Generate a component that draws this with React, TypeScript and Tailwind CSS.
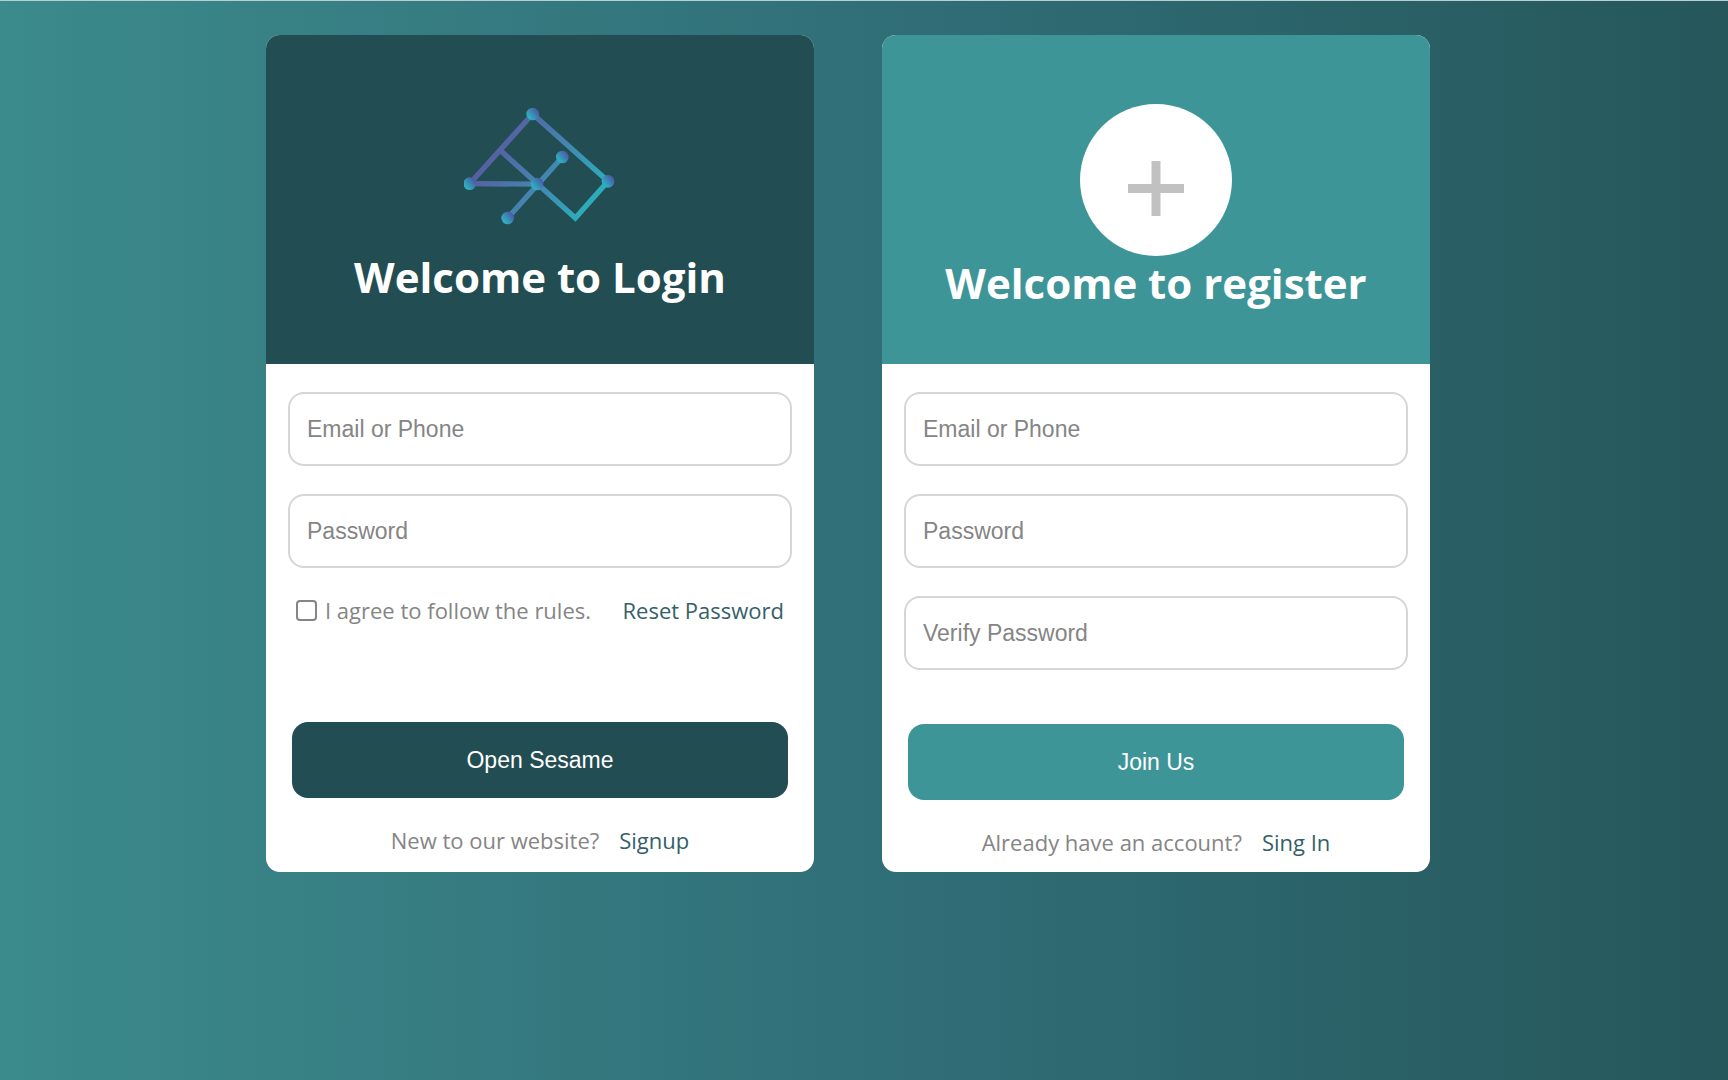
import type { ReactNode } from 'react'

const joints = [
  [277, 72],
  [88, 281],
  [503, 274],
  [366, 201],
  [202, 384],
  [290, 282],
]

function Logo() {
  return (
    <svg width="152" height="146" viewBox="71 42 456 438" fill="none" aria-hidden="true">
      <defs>
        <linearGradient id="line" gradientUnits="userSpaceOnUse" x1="180" y1="150" x2="450" y2="330">
          <stop offset="0" stopColor="#5560a2" />
          <stop offset="0.5" stopColor="#4484b0" />
          <stop offset="1" stopColor="#2eabba" />
        </linearGradient>
        <linearGradient id="dot" x1="0.85" y1="0.2" x2="0.25" y2="0.7">
          <stop offset="0" stopColor="#4b5aa8" />
          <stop offset="1" stopColor="#2fabbd" />
        </linearGradient>
      </defs>
      <g stroke="url(#line)" strokeWidth="16">
        <path d="M88 281 277 72 503 274 405 384 182 183" />
        <path d="M88 281 290 282.5" />
        <path d="M202 384 366 201" />
      </g>
      {joints.map(([cx, cy]) => (
        <circle key={cx} cx={cx} cy={cy} r="19" fill="url(#dot)" />
      ))}
    </svg>
  )
}

function Card({ title, color, picture, children }: { title: string; color: string; picture: ReactNode; children: ReactNode }) {
  return (
    <section className="w-full max-w-[548px] overflow-hidden rounded-[14px] bg-white">
      <header className={`flex h-[329px] flex-col items-center pt-[69px] ${color}`}>
        {picture}
        <h1 className="text-[42px] leading-[54px] font-bold whitespace-nowrap text-white">{title}</h1>
      </header>
      <form className="flex flex-col px-[22px] pt-7 pb-4" onSubmit={(e) => e.preventDefault()}>
        {children}
      </form>
    </section>
  )
}

function Field({ label, type = 'text' }: { label: string; type?: string }) {
  return (
    <input
      type={type}
      aria-label={label}
      placeholder={label}
      className="mb-7 h-[74px] w-full rounded-2xl border-2 border-[#d6d6d6] px-[17px] font-['Liberation_Sans',Arial,sans-serif] text-[23px] text-gray-700 outline-none placeholder:text-[#858585]"
    />
  )
}

function Submit({ label, className }: { label: string; className: string }) {
  return (
    <button
      type="submit"
      className={`mx-1 mb-7 h-[76px] rounded-2xl font-['Liberation_Sans',Arial,sans-serif] text-[23px] text-white ${className}`}
    >
      {label}
    </button>
  )
}

function Footer({ text, link }: { text: string; link: string }) {
  return (
    <p className="flex justify-center gap-5">
      <span>{text}</span>
      <a href="#" className="text-[#355f69]">{link}</a>
    </p>
  )
}

export default function App() {
  return (
    <main className="min-h-screen border-t border-[#b5cfd2] bg-[linear-gradient(90deg,#3b8a8c_0%,#306d76_54%,#25575b_100%)] bg-origin-border px-4 pt-[34px] pb-8 font-['Segoe_UI','Open_Sans',sans-serif] text-[22px] leading-7 text-[#858585] lg:pr-12">
      <div className="flex flex-col items-center justify-center gap-[68px] lg:flex-row lg:items-stretch">
        <Card title="Welcome to Login" color="bg-[#224d52]" picture={<Logo />}>
          <Field label="Email or Phone" />
          <Field label="Password" type="password" />
          <div className="flex items-center justify-between px-2 whitespace-nowrap">
            <label className="flex items-center gap-2">
              <input
                type="checkbox"
                className="size-[21px] appearance-none rounded-sm border-2 border-[#858585] bg-white checked:bg-[#224d52]"
              />
              I agree to follow the rules.
            </label>
            <a href="#" className="text-[#355f69]">Reset Password</a>
          </div>
          <Submit label="Open Sesame" className="mt-[98px] bg-[#224d52]" />
          <Footer text="New to our website?" link="Signup" />
        </Card>

        <Card
          title="Welcome to register"
          color="bg-[#3e9597]"
          picture={
            <button type="button" aria-label="Add photo" className="rounded-full bg-white">
              <svg width="152" height="152" viewBox="0 0 152 152" stroke="#c1c1c1" strokeWidth="9">
                <path d="M48 84.5h56M76 57v55" />
              </svg>
            </button>
          }
        >
          <Field label="Email or Phone" />
          <Field label="Password" type="password" />
          <Field label="Verify Password" type="password" />
          <Submit label="Join Us" className="mt-[26px] bg-[#3e9597]" />
          <Footer text="Already have an account?" link="Sing In" />
        </Card>
      </div>
    </main>
  )
}
